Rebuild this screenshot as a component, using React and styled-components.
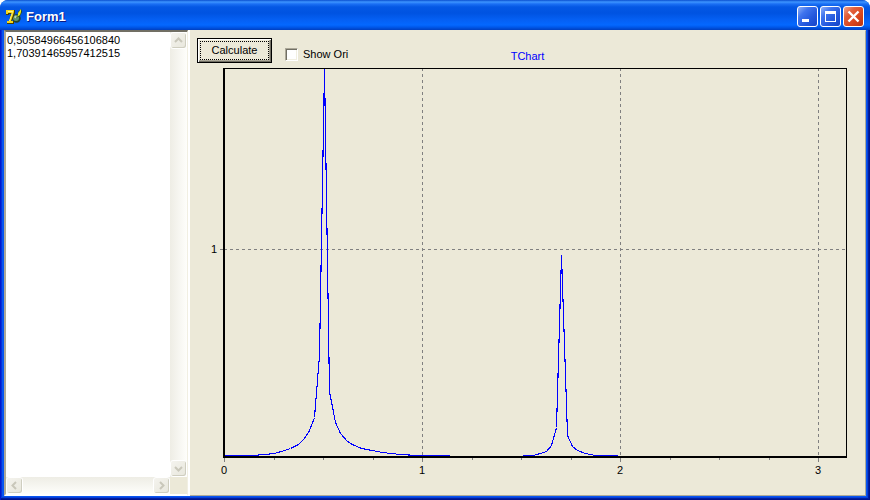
import React from "react";
import styled, { createGlobalStyle, css } from "styled-components";

const GlobalStyle = createGlobalStyle`
  *, *::before, *::after { box-sizing: border-box; }
  html, body { margin: 0; padding: 0; background: #fff; }
  body, button, input, textarea {
    font-family: "Liberation Sans", Arial, sans-serif;
    font-size: 11px;
    line-height: 13px;
    color: #000;
  }
`;

const Window = styled.div`
  display: flex;
  flex-direction: column;
  height: 100vh;
  min-height: 240px;
  overflow: hidden;
  border-radius: 8px 8px 0 0;
  background: #0855dd;
`;

const TitleBar = styled.header`
  flex: none;
  display: flex;
  align-items: center;
  gap: 4px;
  height: 30px;
  padding: 3px 6px 0 6px;
  background: linear-gradient(
    180deg,
    #0a4fd0 0,
    #3d95ff 2px,
    #1a6ff4 4px,
    #0458e4 7px,
    #0053e1 13px,
    #0560f4 20px,
    #0468ff 25px,
    #0059ec 27px,
    #003fc0 30px
  );
`;

const Title = styled.h1`
  flex: 1;
  margin: 0;
  font-size: 13px;
  line-height: 20px;
  font-weight: 700;
  color: #fff;
  text-shadow: 1px 1px 0 #0a1883;
`;

const Captions = styled.div`
  display: flex;
  gap: 2px;
`;

const CaptionButton = styled.button`
  display: flex;
  width: 21px;
  height: 21px;
  padding: 0;
  border: 1px solid #fff;
  border-radius: 3px;
  background: ${(p) =>
    p.$danger
      ? "linear-gradient(135deg, #f0a58e 0, #e2603c 30%, #d9451c 65%, #b83413 100%)"
      : "linear-gradient(135deg, #8fb0f8 0, #3f74ee 30%, #2357dc 65%, #1644c8 100%)"};
`;

const Body = styled.main`
  flex: 1;
  min-height: 0;
  display: grid;
  grid-template-columns: 184px minmax(0, 1fr);
  gap: 2px;
  padding: 0 4px 4px 4px;
  background: linear-gradient(#fff, #fff) content-box, #0855f0;
  box-shadow: inset 1px 0 0 #0019cf, inset -1px -1px 0 #00138c,
    inset -2px -2px 0 #001ea0, inset -3px -3px 0 #0540dc,
    inset 2px 0 0 #0831d9;
`;

const MemoFrame = styled.section`
  display: grid;
  grid-template-columns: minmax(0, 1fr) 17px;
  grid-template-rows: minmax(0, 1fr) 17px;
  border-style: solid;
  border-width: 2px 1px 2px 2px;
  border-color: #716f64 #f1efe2 #fff #aca899;
  background: #ece9d8;
`;

const Memo = styled.textarea`
  width: 100%;
  height: 100%;
  padding: 2px 1px;
  border: 0;
  outline: 0;
  resize: none;
  overflow: hidden;
  white-space: pre;
  background: #fff;
`;

const ScrollBar = styled.div`
  display: flex;
  justify-content: space-between;
  ${(p) =>
    p.$vertical
      ? css`
          flex-direction: column;
          background: linear-gradient(90deg, #eeede5, #fefefb);
        `
      : css`
          background: linear-gradient(180deg, #eeede5, #fefefb);
        `}
`;

const ScrollButton = styled.button`
  display: flex;
  align-items: center;
  justify-content: center;
  width: 17px;
  height: 17px;
  padding: 0;
  border: 1px solid #fff;
  border-radius: 3px;
  background: linear-gradient(135deg, #f4f3ee, #e8e7dc);
  box-shadow: inset -1px -1px 0 #cfcec0;
`;

const ChartPanel = styled.section`
  display: flex;
  flex-direction: column;
  min-width: 0;
  min-height: 0;
  background: #ece9d8;
  border-style: solid;
  border-width: 1px 1px 1px 0;
  border-color: #ece9d8 #aca899 #aca899;
`;

const ToolRow = styled.div`
  flex: none;
  display: grid;
  grid-template-columns: 1fr auto 1fr;
  height: 35px;
  padding: 7px 7px 0 7px;
`;

const Tools = styled.div`
  display: flex;
  align-items: flex-start;
  gap: 13px;
`;

const PushButton = styled.button`
  width: 75px;
  height: 25px;
  padding: 2px;
  border: 1px solid #000;
  background: #ece9d8;
  box-shadow: inset 1px 1px 0 #fff, inset -1px -1px 0 #716f64,
    inset -2px -2px 0 #aca899;
`;

const FocusRing = styled.span`
  display: block;
  height: 19px;
  padding-top: 2px;
  border: 1px dotted #000;
`;

const CheckLabel = styled.label`
  display: flex;
  align-items: center;
  gap: 5px;
  padding-top: 10px;
`;

const CheckBox = styled.input`
  appearance: none;
  width: 13px;
  height: 13px;
  margin: 0;
  border: 1px solid;
  border-color: #aca899 #fff #fff #aca899;
  background: #fff;
  box-shadow: inset 1px 1px 0 #716f64, inset -1px -1px 0 #f1efe2;
  &:checked {
    background: radial-gradient(#000 3px, #fff 4px);
  }
`;

const ChartTitle = styled.h2`
  margin: 0;
  padding-top: 12px;
  font-size: 11px;
  line-height: 13px;
  font-weight: 400;
  color: #00f;
`;

const Plot = styled.svg`
  flex: 1;
  width: 100%;
  min-height: 0;
  shape-rendering: crispEdges;
  text {
    font-size: 11px;
    fill: #000;
  }
`;

const PX_X = 198;
const PX_Y = 208;
const LEFT = 34;
const TOP = 2;
const RIGHT = 656;
const BASE = 390;

const curve = [
  [0, 1], [28, 1], [40, 2], [50, 3], [60, 6], [66, 8], [74, 12], [80, 18],
  [85, 26], [90, 39], [95, 101], [100, 388], [105, 65], [111, 34], [116, 23],
  [123, 15], [128, 12], [137, 8], [148, 6], [158, 4], [176, 2], [193, 1],
  [225, 1],
];
const secondCurve = [
  [298, 1], [309, 1], [316, 3], [322, 5], [327, 11], [332, 29], [337, 201],
  [343, 21], [348, 10], [353, 6], [361, 3], [371, 1], [393, 1],
];
const toPoints = (list) =>
  list.map(([x, y]) => `${LEFT + x},${BASE - y}`).join(" ");

const Arrow = ({ turn }) => (
  <svg width="9" height="9" viewBox="0 0 9 9" aria-hidden="true">
    <path
      d="M1 6 4.5 2.5 8 6"
      fill="none"
      stroke="#c9c7ba"
      strokeWidth="2"
      transform={`rotate(${turn} 4.5 4.5)`}
    />
  </svg>
);

const AppIcon = () => (
  <svg width="16" height="16" viewBox="0 0 16 16" aria-hidden="true">
    <circle cx="10.5" cy="9.5" r="4.2" fill="#23402f" />
    <circle cx="10" cy="9" r="3" fill="#5f9468" />
    <circle cx="9.5" cy="8" r="1.2" fill="#b8d0b8" />
    <path d="M0 1H9V4L6 12H8V15H1V12H3L5 5H3V6H0Z" fill="#4a3d00" />
    <path d="M0 1H8V3L5 12H7V14H1V12H3L6 4H2V5H0Z" fill="#f4d818" />
    <path d="M2 2H7L4 12H3L6 3H2Z" fill="#fff48a" />
    <path d="M15 0 12 3 12 6 10 9 14 7 16 3Z" fill="#2c4a10" />
    <path d="M15 0 12 4V6L11 8 14 6 15 3Z" fill="#e8ec20" />
  </svg>
);

function Chart() {
  const ticks = [0, 1, 2, 3];
  const minor = [1, 2, 3, 5, 6, 7, 9, 10, 11];
  return (
    <Plot viewBox="0 0 675 429" role="img" aria-label="TChart">
      <g stroke="#808080" strokeDasharray="3 3">
        {ticks.slice(1).map((t) => (
          <path key={t} d={`M${LEFT + t * PX_X + 0.5} ${TOP}V${BASE}`} />
        ))}
        <path d={`M${LEFT} ${BASE - PX_Y + 1.5}H${RIGHT}`} />
      </g>
      <g fill="#808080">
        {ticks.map((t) => (
          <rect key={t} x={LEFT + t * PX_X} y={BASE + 2} width="1" height="4" />
        ))}
        {minor.map((m) => (
          <rect
            key={m}
            x={Math.round(LEFT + (m * PX_X) / 4)}
            y={BASE + 2}
            width="1"
            height="2"
          />
        ))}
        <rect x={LEFT - 4} y={BASE - PX_Y + 1} width="3" height="1" />
      </g>
      <g fill="none" stroke="#00f" strokeWidth="1.1" transform="translate(.5 .5)">
        <polyline points={toPoints(curve)} />
        <polyline points={toPoints(secondCurve)} />
      </g>
      <path
        d={`M${LEFT} ${TOP + 0.5}H${RIGHT + 0.5}V${BASE}`}
        fill="none"
        stroke="#000"
      />
      <path
        d={`M${LEFT} ${TOP}V${BASE + 1}H${RIGHT + 1}`}
        fill="none"
        stroke="#000"
        strokeWidth="2"
      />
      {ticks.map((t) => (
        <text key={t} x={LEFT + t * PX_X} y={BASE + 18} textAnchor="middle">
          {t}
        </text>
      ))}
      <text x={LEFT - 7} y={BASE - PX_Y + 5} textAnchor="end">
        1
      </text>
    </Plot>
  );
}

export default function App() {
  return (
    <>
      <GlobalStyle />
      <Window>
        <TitleBar>
          <AppIcon />
          <Title>Form1</Title>
          <Captions>
            <CaptionButton aria-label="Minimize">
              <svg width="19" height="19" viewBox="0 0 19 19">
                <path d="M4 12H11V15H4Z" fill="#fff" />
              </svg>
            </CaptionButton>
            <CaptionButton aria-label="Maximize">
              <svg width="19" height="19" viewBox="0 0 19 19">
                <path d="M4 4H15V15H4ZM5 7V14H14V7Z" fill="#fff" fillRule="evenodd" />
              </svg>
            </CaptionButton>
            <CaptionButton aria-label="Close" $danger>
              <svg width="19" height="19" viewBox="0 0 19 19">
                <path d="M4.5 4.5 14.5 14.5M14.5 4.5 4.5 14.5" stroke="#fff" strokeWidth="2.4" />
              </svg>
            </CaptionButton>
          </Captions>
        </TitleBar>
        <Body>
          <MemoFrame>
            <Memo
              aria-label="Results"
              spellCheck={false}
              defaultValue={"0,50584966456106840\n1,70391465957412515"}
            />
            <ScrollBar $vertical>
              <ScrollButton aria-label="Scroll up"><Arrow turn={0} /></ScrollButton>
              <ScrollButton aria-label="Scroll down"><Arrow turn={180} /></ScrollButton>
            </ScrollBar>
            <ScrollBar>
              <ScrollButton aria-label="Scroll left"><Arrow turn={270} /></ScrollButton>
              <ScrollButton aria-label="Scroll right"><Arrow turn={90} /></ScrollButton>
            </ScrollBar>
          </MemoFrame>
          <ChartPanel>
            <ToolRow>
              <Tools>
                <PushButton>
                  <FocusRing>Calculate</FocusRing>
                </PushButton>
                <CheckLabel>
                  <CheckBox type="checkbox" />
                  Show Ori
                </CheckLabel>
              </Tools>
              <ChartTitle>TChart</ChartTitle>
            </ToolRow>
            <Chart />
          </ChartPanel>
        </Body>
      </Window>
    </>
  );
}
